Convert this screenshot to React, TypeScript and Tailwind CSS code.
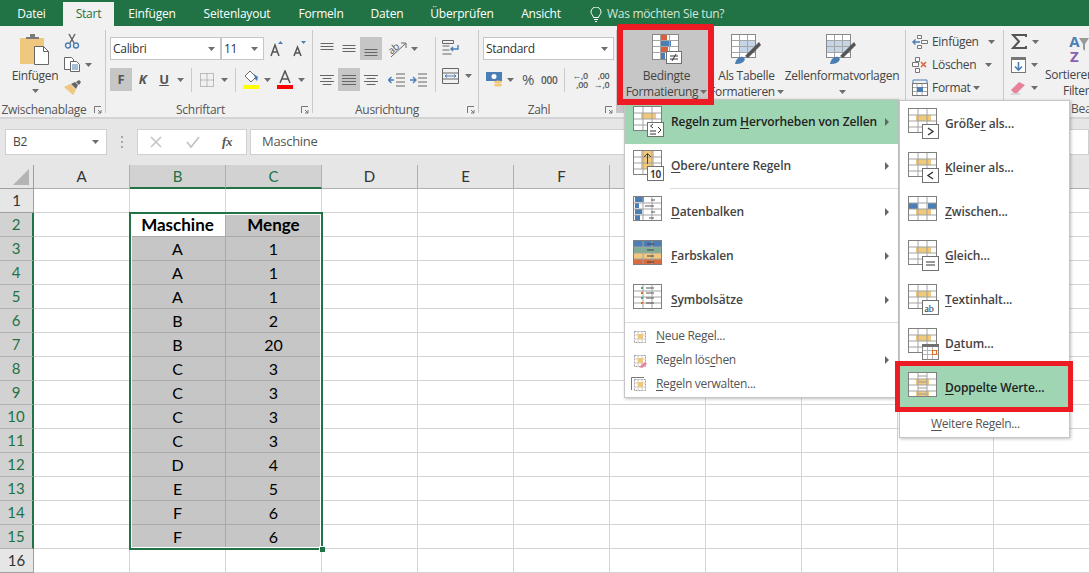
import React from "react";

const columns = ["A", "B", "C", "D", "E", "F", "G", "H", "I", "J", "K"];
const tableRows: [string, string][] = [
  ["Maschine", "Menge"],
  ["A", "1"],
  ["A", "1"],
  ["A", "1"],
  ["B", "2"],
  ["B", "20"],
  ["C", "3"],
  ["C", "3"],
  ["C", "3"],
  ["C", "3"],
  ["D", "4"],
  ["E", "5"],
  ["F", "6"],
  ["F", "6"],
];
const rowNumbers = Array.from({ length: 16 }, (_, i) => i + 1);

const Caret = ({ className = "" }: { className?: string }) => (
  <svg width="7" height="4" viewBox="0 0 7 4" className={`shrink-0 ${className}`}>
    <path d="M0 0h7L3.5 4z" fill="#6e6e6e" />
  </svg>
);

const Launcher = () => (
  <svg width="8" height="8" viewBox="0 0 8 8" className="shrink-0">
    <path d="M.5 7V.5H7M4 4l3 3M7 4v3H4" fill="none" stroke="#777" />
  </svg>
);

const Sep = ({ h = "h-[24px]", m = "mx-[5px]" }: { h?: string; m?: string }) => (
  <div className={`w-px shrink-0 bg-[#c9c9c9] ${h} ${m}`} />
);

const Lines = ({ rows, active = false }: { rows: [number, number][]; active?: boolean }) => (
  <div className={`flex h-[23px] w-[22px] shrink-0 items-center justify-center ${active ? "bg-[#c6c6c6]" : ""}`}>
    <svg width="16" height="16" viewBox="0 0 16 16">
      {rows.map(([y, w], i) => (
        <rect key={i} x={(16 - w) / 2} y={y} width={w} height="1" fill="#666" />
      ))}
    </svg>
  </div>
);

function Group({ width, label, children }: { width: string; label: string; children: React.ReactNode }) {
  return (
    <div className={`flex h-[83px] shrink-0 flex-col border-r border-[#c9c9c9] ${width}`}>
      <div className="h-[71px] shrink-0">{children}</div>
      <div className="mt-[3px] flex h-[12px] shrink-0 items-center pr-[3px]">
        <div className="flex-1 pr-[6px] text-center text-[12px] leading-none text-[#555]">{label}</div>
        <Launcher />
      </div>
    </div>
  );
}

const GridBase = ({ children }: { children?: React.ReactNode }) => (
  <>
    <rect x="1" y="1" width="27" height="24" fill="#fff" />
    {children}
    <g stroke="#a3a3a3" fill="none">
      <path d="M10 1v24M19 1v24M1 7h27M1 13h27M1 19h27" />
    </g>
    <rect x=".5" y=".5" width="28" height="24" fill="none" stroke="#808080" />
  </>
);

const Badge = ({ children }: { children: React.ReactNode }) => (
  <>
    <rect x="14.5" y="16.5" width="16" height="14" fill="#fff" stroke="#707070" />
    {children}
  </>
);

const hl = "#f0c97d";
const blue = "#4a7eb5";

function MenuIcon({ kind }: { kind: string }) {
  return (
    <svg width="32" height="32" viewBox="0 0 32 32" className="shrink-0">
      <GridBase>
        {kind !== "bars" && kind !== "scale" && kind !== "sym" && kind !== "top" && kind !== "ten" && kind !== "dup" && kind !== "between" && (
          <rect x="8" y="7" width="15" height="6" fill={hl} />
        )}
        {kind === "between" && (
          <>
            <rect x="1" y="7" width="9" height="6" fill={blue} />
            <rect x="20" y="7" width="8" height="6" fill={blue} />
            <rect x="8" y="13" width="15" height="6" fill={hl} />
          </>
        )}
        {kind === "ten" && <rect x="8" y="1" width="13" height="18" fill={hl} />}
        {kind === "bars" && (
          <>
            <rect x="2" y="1" width="9" height="5" fill={blue} />
            <rect x="2" y="7" width="4" height="5" fill={blue} />
            <rect x="2" y="13" width="7" height="5" fill={blue} />
            <rect x="2" y="19" width="5" height="5" fill={blue} />
          </>
        )}
        {kind === "scale" && (
          <>
            <rect x="1" y="1" width="27" height="6" fill={blue} />
            <rect x="1" y="7" width="27" height="6" fill="#7fae93" />
            <rect x="1" y="13" width="27" height="6" fill={hl} />
            <rect x="1" y="19" width="27" height="6" fill="#d96b3f" />
          </>
        )}
        {kind === "dup" && (
          <>
            <rect x="8" y="7" width="13" height="6" fill={hl} />
            <rect x="8" y="19" width="13" height="6" fill={hl} />
          </>
        )}
      </GridBase>
      {kind === "ten" && <path d="M14.5 14V4M11 7l3.5-3.5L18 7" fill="none" stroke="#444" />}
      {kind === "bars" && <path d="M18 4h4M12 10h9M18 16h4M16 22h5" stroke="#555" />}
      {kind === "scale" && <path d="M14 4h7M14 10h7M14 16h7M14 22h7" stroke="#444" />}
      {kind === "dup" && <path d="M10 4h9M10 10h9M10 16h9M10 22h9" stroke="#999" />}
      {kind === "sym" && (
        <>
          <path d="M13 4h8M13 9h8M13 14h8M13 19h8" stroke="#555" />
          <rect x="8" y="3" width="2" height="2" fill="#5d9c78" />
          <rect x="8" y="8" width="2" height="2" fill="#e56b1f" />
          <rect x="8" y="13" width="2" height="2" fill="#5d9c78" />
          <rect x="8" y="18" width="2" height="2" fill="#e56b1f" />
        </>
      )}
      {kind === "hi" && (
        <Badge>
          <path d="M20 18l-2.500 2 2.500 2M17 25h6M17 28h6M25 21l3 3-3 3" fill="none" stroke="#333" />
        </Badge>
      )}
      {kind === "ten" && (
        <Badge>
          <text x="17" y="28" fontSize="10" fontWeight="600" fill="#333" fontFamily="Noto Sans">10</text>
        </Badge>
      )}
      {kind === "gt" && <Badge><path d="M20 20l5 3.500-5 3.500" fill="none" stroke="#333" strokeWidth="1.400" /></Badge>}
      {kind === "lt" && <Badge><path d="M25 20l-5 3.500 5 3.500" fill="none" stroke="#333" strokeWidth="1.400" /></Badge>}
      {kind === "eq" && <Badge><path d="M18 22h9M18 25h9" stroke="#333" /></Badge>}
      {kind === "ab" && (
        <Badge>
          <text x="16.500" y="28" fontSize="10" fill="#333" fontFamily="Liberation Serif">ab</text>
        </Badge>
      )}
      {kind === "date" && (
        <>
          <rect x="14.500" y="16.500" width="16" height="15" fill="#fff" stroke="#808080" />
          <rect x="14" y="16" width="17" height="3" fill="#707070" />
          <path d="M19.500 19v12M24.500 19v12M15 22.500h15M15 26.500h15" stroke="#b5b5b5" />
          <rect x="24.500" y="22.500" width="4" height="4" fill="#fff" stroke="#e56b1f" />
        </>
      )}
    </svg>
  );
}

const SmallIcon = ({ kind }: { kind: string }) => (
  <svg width="16" height="16" viewBox="0 0 16 16" className="shrink-0">
    {kind === "manage" && <path d="M.5 14V1.500H13" fill="none" stroke="#777" />}
    <rect x="3.500" y="3.500" width="11" height="11" fill="#fff" stroke="#999" strokeDasharray="2 1" />
    <path d="M3 7h12M3 11h12M7 3v12M11 3v12" stroke="#ccc" />
    <rect x="7" y="6" width="5" height="5" fill={hl} />
    {kind === "del" && <path d="M8 15l6-5 2 2-5 4z" fill="#e8829b" />}
  </svg>
);

const Ul = ({ children }: { children: React.ReactNode }) => <span className="underline underline-offset-2">{children}</span>;

const SubArrow = () => (
  <svg width="4" height="8" viewBox="0 0 4 8" className="mr-[9px]">
    <path d="M0 0l4 4-4 4z" fill="#666" />
  </svg>
);

function BigItem({ kind, active, h = "h-[44px]", textGap = "ml-[6px]", arrow, children }: { kind: string; active?: boolean; h?: string; textGap?: string; arrow?: boolean; children: React.ReactNode }) {
  return (
    <div className={`flex items-center pl-[8px] ${h} ${active ? "bg-[#a0d5b4] text-[#222]" : "text-[#444]"}`}>
      <MenuIcon kind={kind} />
      <div className={`flex-1 text-[12px] font-semibold tracking-[-0.1px] ${textGap}`}>{children}</div>
      {arrow && <SubArrow />}
    </div>
  );
}

function SmallItem({ kind, arrow, children }: { kind: string; arrow?: boolean; children: React.ReactNode }) {
  return (
    <div className="flex h-[24px] items-center pl-[6px] text-[12px] text-[#555]">
      <SmallIcon kind={kind} />
      <div className="ml-[9px] flex-1">{children}</div>
      {arrow && <SubArrow />}
    </div>
  );
}

function Tabs() {
  const tabs = ["Einfügen", "Seitenlayout", "Formeln", "Daten", "Überprüfen", "Ansicht"];
  const widths = ["w-[76px]", "w-[94px]", "w-[74px]", "w-[58px]", "w-[92px]", "w-[66px]"];
  return (
    <div className="flex h-[26px] items-end bg-[#217346] text-[12px] tracking-[-0.2px] text-white">
      <div className="flex h-[24px] w-[63px] items-center justify-center">Datei</div>
      <div className="flex h-[24px] w-[51px] items-center justify-center bg-[#f1f1f1] text-[#217346]">Start</div>
      {tabs.map((t, i) => (
        <div key={t} className={`flex h-[24px] items-center justify-center ${widths[i]}`}>
          {t}
        </div>
      ))}
      <div className="ml-[16px] flex h-[24px] items-center gap-[5px] tracking-[-0.3px] text-[#d5e5da]">
        <svg width="12" height="15" viewBox="0 0 12 15">
          <path d="M3.500 10.500C3 8 1 7.500 1 5a5 5 0 0 1 10 0c0 2.500-2 3-2.500 5.500zM4 12.500h4M5 14.500h2" fill="none" stroke="#fff" />
        </svg>
        Was möchten Sie tun?
      </div>
    </div>
  );
}

const PasteIcon = () => (
  <svg width="30" height="32" viewBox="0 0 30 32">
    <rect x="0" y="4" width="24" height="26" rx="1" fill="#efc77f" />
    <path d="M6 5V3h4V0h5v3h4v2z" fill="#7a7a7a" />
    <path d="M14.500 12.500h9l5 5v13h-14z" fill="#fff" stroke="#666" />
    <path d="M23.500 12.500v5h5" fill="none" stroke="#666" />
  </svg>
);

const CutIcon = () => (
  <svg width="16" height="16" viewBox="0 0 16 16">
    <path d="M5 1l5 9M11 1L6 10" stroke="#666" strokeWidth="1.500" fill="none" />
    <circle cx="4" cy="12.500" r="2.500" fill="none" stroke={blue} strokeWidth="1.400" />
    <circle cx="12" cy="12.500" r="2.500" fill="none" stroke={blue} strokeWidth="1.400" />
  </svg>
);

const CopyIcon = () => (
  <svg width="16" height="15" viewBox="0 0 16 15">
    <path d="M.5.500h7l2 2v10h-9z" fill="#fff" stroke="#666" />
    <path d="M6.500 4.500h6l3 3v7h-9z" fill="#fff" stroke="#666" />
    <path d="M8 8h6M8 10h6M8 12h6" stroke={blue} />
  </svg>
);

const BrushIcon = () => (
  <svg width="18" height="15" viewBox="0 0 18 15">
    <path d="M0 7l6-3 6 6-3 5z" fill="#efc77f" />
    <path d="M7 4l4-2 3 3-2 4z" fill="#666" />
    <path d="M12 2l3-2 2 2-2 3z" fill="#666" />
  </svg>
);

function ClipboardGroup() {
  return (
    <Group width="w-[106px]" label="Zwischenablage">
      <div className="flex">
        <div className="flex w-[64px] shrink-0 flex-col items-center pl-[6px] pt-[4px]">
          <PasteIcon />
          <div className="mt-[2px] text-[12px] leading-[16px] text-[#444]">Einfügen</div>
          <Caret className="mt-[5px]" />
        </div>
        <div className="flex flex-col gap-[8px] pt-[3px]">
          <CutIcon />
          <div className="flex items-center gap-[5px]">
            <CopyIcon />
            <Caret />
          </div>
          <BrushIcon />
        </div>
      </div>
    </Group>
  );
}

const Field = ({ w, text }: { w: string; text: string }) => (
  <div className={`flex h-[23px] items-center justify-between border border-[#c6c6c6] bg-white pl-[2px] pr-[5px] text-[12px] text-[#333] ${w}`}>
    {text}
    <Caret />
  </div>
);

function FontGroup() {
  return (
    <Group width="w-[207px]" label="Schriftart">
      <div className="pl-[4px] pt-[7px]">
        <div className="flex items-center">
          <Field w="w-[111px]" text="Calibri" />
          <Field w="w-[43px]" text="11" />
          <svg width="14" height="16" viewBox="0 0 14 16" className="ml-[6px]">
            <path d="M1 15L5 4l4 11M2.500 11h5" fill="none" stroke="#555" strokeWidth="1.500" />
            <path d="M8 3l2.500-3L13 3z" fill={blue} />
          </svg>
          <svg width="14" height="16" viewBox="0 0 14 16" className="ml-[9px]">
            <path d="M1 15l3.500-9L8 15M2.500 12h4" fill="none" stroke="#555" strokeWidth="1.500" />
            <path d="M8 0h5l-2.500 3z" fill={blue} />
          </svg>
        </div>
        <div className="mt-[8px] flex h-[23px] items-center text-[13px] font-bold text-[#555]">
          <div className="flex h-full w-[22px] items-center justify-center bg-[#c6c6c6]">F</div>
          <div className="w-[21px] text-center italic">K</div>
          <div className="w-[22px] text-center underline">U</div>
          <Caret className="ml-[2px]" />
          <Sep m="mx-[7px]" />
          <svg width="14" height="14" viewBox="0 0 14 14" className="ml-[1px]">
            <path d="M.5.500h13v13H.5z" fill="none" stroke="#888" strokeDasharray="1 1" />
            <path d="M7 .500v13M.5 7h13" stroke="#888" strokeDasharray="1 1" />
          </svg>
          <Caret className="ml-[7px]" />
          <Sep m="mx-[7px]" />
          <svg width="16" height="19" viewBox="0 0 16 19">
            <path d="M7 1l6 6-5 5-6-6z" fill="#fff" stroke="#666" />
            <path d="M11 4l4 3-1 4-2-2z" fill={blue} />
            <rect y="15" width="16" height="4" fill="#ffff00" />
          </svg>
          <Caret className="ml-[5px]" />
          <svg width="16" height="19" viewBox="0 0 16 19" className="ml-[6px]">
            <path d="M3 13L8 1l5 12M5 9h6" fill="none" stroke="#555" strokeWidth="1.500" />
            <rect y="15" width="16" height="4" fill="#ff0000" />
          </svg>
          <Caret className="ml-[5px]" />
        </div>
      </div>
    </Group>
  );
}

function AlignGroup() {
  return (
    <Group width="w-[166px]" label="Ausrichtung">
      <div className="flex pt-[7px]">
        <div className="w-[122px] shrink-0">
          <div className="flex items-center pl-[3px]">
            <Lines rows={[[2, 13], [5, 13], [8, 13]]} />
            <Lines rows={[[4, 13], [7, 13], [10, 13]]} />
            <Lines rows={[[8, 13], [11, 13], [14, 13]]} active />
            <svg width="20" height="18" viewBox="0 0 20 18" className="ml-[6px]">
              <text x="1" y="12" fontSize="10" fill="#555" fontFamily="Open Sans" transform="rotate(-40 6 10)">ab</text>
              <path d="M3 17l14-13M13 3h5v5" stroke="#666" fill="none" />
            </svg>
            <Caret className="ml-[3px]" />
          </div>
          <div className="mt-[8px] flex items-center pl-[3px]">
            <Lines rows={[[3, 14], [6, 9], [9, 14], [12, 9]]} />
            <Lines rows={[[3, 14], [6, 14], [9, 14], [12, 14]]} active />
            <Lines rows={[[3, 14], [6, 9], [9, 14], [12, 9]]} />
            <svg width="17" height="14" viewBox="0 0 17 14" className="ml-[6px]">
              <path d="M8 1h9M8 5h9M8 9h9M8 13h9" stroke="#666" />
              <path d="M6 7H1M3.500 4L.5 7l3 3" fill="none" stroke={blue} strokeWidth="1.400" />
            </svg>
            <svg width="17" height="14" viewBox="0 0 17 14" className="ml-[5px]">
              <path d="M8 1h9M8 5h9M8 9h9M8 13h9" stroke="#666" />
              <path d="M0 7h5M3 4l3 3-3 3" fill="none" stroke={blue} strokeWidth="1.400" />
            </svg>
          </div>
        </div>
        <Sep h="h-[55px]" m="mr-[6px]" />
        <div className="pt-[2px]">
          <svg width="17" height="16" viewBox="0 0 17 16">
            <path d="M.5 1.500h11v3H.5zM.5 7h7M.5 11h7M.5 15h9" fill="none" stroke="#666" />
            <path d="M16 6v4h-7M11 8l-2 2 2 2" fill="none" stroke={blue} strokeWidth="1.400" />
          </svg>
          <div className="mt-[13px] flex items-center gap-[6px]">
            <svg width="17" height="16" viewBox="0 0 17 16">
              <path d="M.5.500h16v15H.5zM.5 5h16M.5 11h16" fill="none" stroke="#666" />
              <path d="M3 8h11M5 6.500L3 8l2 1.500M12 6.500L14 8l-2 1.500" fill="none" stroke={blue} />
            </svg>
            <Caret />
          </div>
        </div>
      </div>
    </Group>
  );
}

function NumberGroup() {
  return (
    <Group width="w-[138px]" label="Zahl">
      <div className="pl-[4px] pt-[7px]">
        <Field w="w-[131px]" text="Standard" />
        <div className="mt-[8px] flex h-[23px] items-center pl-[3px] text-[#555]">
          <svg width="17" height="17" viewBox="0 0 17 17">
            <rect x="0" y="1" width="16" height="9" fill={blue} />
            <circle cx="8" cy="5.500" r="2.500" fill="#fff" />
            <ellipse cx="12" cy="11" rx="4" ry="1.500" fill={hl} />
            <ellipse cx="12" cy="14" rx="4" ry="1.500" fill={hl} />
          </svg>
          <Caret className="ml-[4px]" />
          <div className="ml-[8px] text-[15px] leading-none">%</div>
          <div className="ml-[7px] text-[10px] font-semibold leading-none">000</div>
          <Sep m="mx-[7px]" />
          <div className="flex flex-col items-end text-[9px] font-semibold leading-[9px] tracking-[-0.4px]">
            <span>←,0</span>
            <span>,00</span>
          </div>
          <div className="ml-[6px] flex flex-col items-end text-[9px] font-semibold leading-[9px] tracking-[-0.4px]">
            <span>,00</span>
            <span>→,0</span>
          </div>
        </div>
      </div>
    </Group>
  );
}

function BigButton({ w, lines, active, children }: { w: string; lines: string[]; active?: boolean; children: React.ReactNode }) {
  return (
    <div className={`flex shrink-0 flex-col items-center pt-[4px] text-[12px] leading-[16px] text-[#444] ${w} ${active ? "bg-[#c6c6c6]" : ""}`}>
      <div className="h-[32px]">{children}</div>
      <div className="mt-[2px] whitespace-nowrap">{lines[0]}</div>
      <div className="flex h-[16px] items-center gap-[2px] whitespace-nowrap">
        {lines[1]}
        <Caret />
      </div>
    </div>
  );
}

const TableIcon = ({ accent }: { accent: React.ReactNode }) => (
  <svg width="32" height="31" viewBox="0 0 32 31">
    <rect x=".5" y=".5" width="24" height="23" fill="#fff" stroke="#888" />
    {accent}
    <path d="M8.500 1v22M16.500 1v22M1 6.500h23M1 12.500h23M1 18.500h23" stroke="#a6a6a6" />
    <path d="M4 30c1-5 4-8 8-7l2 2c-1 4-5 5-10 5z" fill={blue} />
    <path d="M14 22l3 2 13-13-2-3z" fill="#555" />
  </svg>
);

function StylesGroup() {
  return (
    <div className="flex h-[83px] w-[289px] shrink-0 border-r border-[#c9c9c9]">
      <BigButton w="w-[93px] pl-[6px]" lines={["Bedingte", "Formatierung"]} active>
        <svg width="30" height="30" viewBox="0 0 30 30">
          <rect x=".5" y=".5" width="26" height="25" fill="#fff" stroke="#888" />
          <rect x="8" y="1" width="7" height="5" fill="#d9603a" />
          <rect x="8" y="7" width="11" height="5" fill={blue} />
          <rect x="8" y="13" width="8" height="5" fill="#d9603a" />
          <rect x="8" y="19" width="5" height="6" fill={blue} />
          <path d="M8.500 1v24M17.500 1v24M1 6.500h25M1 12.500h25M1 18.500h25" stroke="#a6a6a6" />
          <rect x="14.500" y="17.500" width="15" height="12" fill="#fff" stroke="#707070" />
          <path d="M18 22h8M18 25h8M24 20l-4 7" stroke="#333" fill="none" />
        </svg>
      </BigButton>
      <BigButton w="w-[73px]" lines={["Als Tabelle", "Formatieren"]}>
        <TableIcon accent={<rect x="8" y="6" width="16" height="12" fill="#c5d4e6" />} />
      </BigButton>
      <div className="flex w-[118px] shrink-0 flex-col items-center pt-[4px] text-[12px] leading-[16px] text-[#444]">
        <div className="h-[32px]">
          <TableIcon accent={<rect x="1" y="6" width="23" height="12" fill="#c5d4e6" />} />
        </div>
        <div className="mt-[2px] whitespace-nowrap">Zellenformatvorlagen</div>
        <Caret className="mt-[6px]" />
      </div>
    </div>
  );
}

function CellRow({ label, caret, children }: { label: string; caret: string; children: React.ReactNode }) {
  return (
    <div className="flex h-[23px] items-center text-[12px] text-[#444]">
      <div className="flex w-[26px] justify-center pl-[2px]">{children}</div>
      <div>{label}</div>
      <Caret className={caret} />
    </div>
  );
}

function CellsGroup() {
  return (
    <div className="flex h-[83px] w-[98px] shrink-0 flex-col border-r border-[#c9c9c9]">
      <CellRow label="Einfügen" caret="ml-[9px]">
        <svg width="16" height="14" viewBox="0 0 16 14">
          <path d="M5.500.500h4v3h-4zM5.500 10.500h4v3h-4zM9.500 5.500h6v3h-6z" fill="#fff" stroke="#777" />
          <path d="M8 7H1M3.500 4.500L1 7l2.500 2.500" fill="none" stroke={blue} strokeWidth="1.400" />
        </svg>
      </CellRow>
      <CellRow label="Löschen" caret="ml-[9px]">
        <svg width="16" height="16" viewBox="0 0 16 16">
          <path d="M3.500.500h4v4h-4zM.5 5.500h6v4h-6zM3.500 11.500h4v4h-4z" fill="#fff" stroke="#777" />
          <path d="M9 5l5 5M14 5l-5 5" stroke="#d9603a" strokeWidth="1.500" />
        </svg>
      </CellRow>
      <CellRow label="Format" caret="ml-[2px]">
        <svg width="16" height="17" viewBox="0 0 16 17">
          <path d="M1 1h14M1 1v3M15 1v3" stroke={blue} />
          <rect x=".5" y="4.500" width="15" height="12" fill="#fff" stroke="#777" />
          <path d="M5 5v11M10 5v11M1 8.500h14M1 12.500h14" stroke="#aaa" />
          <rect x="5" y="8" width="6" height="5" fill={blue} />
        </svg>
      </CellRow>
    </div>
  );
}

function EditGroup() {
  return (
    <div className="flex h-[87px] flex-1">
      <div className="flex w-[38px] shrink-0 flex-col pl-[7px]">
        <div className="flex h-[23px] items-center gap-[5px]">
          <svg width="16" height="15" viewBox="0 0 16 15">
            <path d="M15 3V1H2l6 6.500L2 14h13v-2" fill="none" stroke="#555" strokeWidth="2" />
          </svg>
          <Caret />
        </div>
        <div className="flex h-[23px] items-center gap-[5px]">
          <svg width="15" height="16" viewBox="0 0 15 16">
            <rect x=".5" y=".5" width="14" height="15" fill="#fff" stroke="#777" />
            <rect width="15" height="3" fill="#777" />
            <path d="M7.500 5v8M4 9.500l3.500 3.500L11 9.500" fill="none" stroke={blue} strokeWidth="1.600" />
          </svg>
          <Caret />
        </div>
        <div className="flex h-[23px] items-center gap-[5px]">
          <svg width="15" height="14" viewBox="0 0 15 14">
            <path d="M0 9l8-8 6 3-8 8H3z" fill="#e8829b" />
            <path d="M0 13h9" stroke="#bbb" />
          </svg>
          <Caret />
        </div>
      </div>
      <div className="flex min-w-0 flex-1 flex-col items-start pl-[3px] pt-[4px] text-[12px] leading-[16px] text-[#444]">
        <div className="flex h-[32px] w-full justify-center pl-[17px] text-[15px] font-bold leading-[15px]">
          <div className="flex flex-col items-center">
            <span className="text-[#4a7eb5]">A</span>
            <span className="text-[#8a5fb0]">Z</span>
          </div>
          <svg width="10" height="14" viewBox="0 0 10 14" className="mt-[4px] shrink-0">
            <path d="M0 0h10L6 6v7L4 11V6z" fill="#999" />
          </svg>
        </div>
        <div className="mt-[2px] whitespace-nowrap">Sortieren</div>
        <div className="w-full pl-[18px]">Filtern</div>
        <div className="mt-[2px] whitespace-nowrap pl-[26px] text-[#555]">Bea</div>
      </div>
    </div>
  );
}

function Ribbon() {
  return (
    <div className="flex h-[93px] overflow-hidden border-b-2 border-[#d4d4d4] bg-[#f1f1f1] pt-[4px]">
      <ClipboardGroup />
      <FontGroup />
      <AlignGroup />
      <NumberGroup />
      <StylesGroup />
      <CellsGroup />
      <EditGroup />
    </div>
  );
}

function FormulaBar() {
  return (
    <div className="flex h-[46px] items-start bg-[#e6e6e6] pt-[10px] text-[12px] text-[#444]">
      <div className="ml-[5px] flex h-[26px] w-[102px] items-center justify-between border border-[#d0d0d0] bg-white px-[7px]">
        B2
        <Caret />
      </div>
      <div className="flex h-[26px] w-[30px] flex-col items-center justify-center gap-[3px]">
        <div className="h-[2px] w-[2px] bg-[#a6a6a6]" />
        <div className="h-[2px] w-[2px] bg-[#a6a6a6]" />
        <div className="h-[2px] w-[2px] bg-[#a6a6a6]" />
      </div>
      <div className="flex h-[26px] w-[110px] items-center border border-[#d0d0d0] bg-white pl-[12px]">
        <svg width="12" height="12" viewBox="0 0 12 12">
          <path d="M1 1l10 10M11 1L1 11" stroke="#c4c4c4" strokeWidth="1.600" />
        </svg>
        <svg width="14" height="12" viewBox="0 0 14 12" className="ml-[24px]">
          <path d="M1 6l4 5 8-10" fill="none" stroke="#c4c4c4" strokeWidth="1.800" />
        </svg>
        <span className="ml-[22px] [font-family:'Liberation_Serif',serif] text-[13px] font-bold italic text-[#555]">fx</span>
      </div>
      <div className="ml-[3px] flex h-[26px] flex-1 items-center border border-[#d0d0d0] bg-white pl-[11px] text-[13px] text-[#555]">Maschine</div>
    </div>
  );
}

function Sheet() {
  return (
    <div className="relative grid grid-cols-[34px_repeat(11,96px)] auto-rows-[24px] tracking-normal [font-family:Lato,sans-serif]">
      <div className="flex items-end justify-end border-r border-b border-[#9f9f9f] bg-[#e6e6e6] pb-[3px] pr-[4px]">
        <svg width="16" height="16" viewBox="0 0 16 16">
          <path d="M16 0v16H0z" fill="#b4b4b4" />
        </svg>
      </div>
      {columns.map((c) => {
        const active = c === "B" || c === "C";
        return (
          <div
            key={c}
            className={`flex items-center justify-center border-r text-[15px] ${
              active ? "border-b-2 border-r-[#b0b0b0] border-b-[#217346] bg-[#d2d2d2] text-[#217346]" : "border-b border-[#b0b0b0] bg-[#e6e6e6] text-[#333]"
            }`}
          >
            {c}
          </div>
        );
      })}
      {rowNumbers.map((n) => {
        const active = n >= 2 && n <= 15;
        const row = active ? tableRows[n - 2] : null;
        return (
          <React.Fragment key={n}>
            <div
              className={`flex items-center justify-center border-b text-[15px] ${
                active ? "border-r-2 border-b-[#b0b0b0] border-r-[#217346] bg-[#d2d2d2] text-[#217346]" : "border-r border-[#9f9f9f] bg-[#e6e6e6] text-[#333]"
              }`}
            >
              {n}
            </div>
            {columns.map((c) => {
              const inTable = row !== null && (c === "B" || c === "C");
              const header = n === 2;
              const white = c === "B" && header;
              return (
                <div
                  key={c}
                  className={`flex items-center justify-center border-r border-b text-black ${
                    inTable ? `border-[#a9a9a9] ${white ? "bg-white" : "bg-[#c6c6c6]"} ${header ? "text-[17px] font-bold" : "text-[16px]"}` : "border-[#d4d4d4] bg-white"
                  }`}
                >
                  {inTable ? row![c === "B" ? 0 : 1] : ""}
                </div>
              );
            })}
          </React.Fragment>
        );
      })}
      {/* selection frame */}
      <div className="pointer-events-none absolute left-[129px] top-[47px] h-[338px] w-[194px] border-2 border-[#217346]">
        <div className="h-full w-full border border-white" />
      </div>
      <div className="absolute left-[319px] top-[381px] box-content h-[5px] w-[5px] border-l border-t border-white bg-[#217346]" />
    </div>
  );
}

function RulesMenu() {
  return (
    <div className="absolute left-[624px] top-[99px] w-[275px] border border-[#c6c6c6] bg-white shadow-[1px_1px_3px_rgba(0,0,0,0.25)]">
      <BigItem kind="hi" active arrow>Regeln zum <Ul>H</Ul>ervorheben von Zellen</BigItem>
      <BigItem kind="ten" arrow><Ul>O</Ul>bere/untere Regeln</BigItem>
      <div className="ml-[45px] h-px bg-[#dcdcdc]" />
      <BigItem kind="bars" h="h-[45px]" arrow><Ul>D</Ul>atenbalken</BigItem>
      <BigItem kind="scale" arrow><Ul>F</Ul>arbskalen</BigItem>
      <BigItem kind="sym" arrow><Ul>S</Ul>ymbolsätze</BigItem>
      <div className="h-px bg-[#dcdcdc]" />
      <div className="py-[1px]">
        <SmallItem kind="new"><Ul>N</Ul>eue Regel...</SmallItem>
        <SmallItem kind="del" arrow>Regeln lös<Ul>c</Ul>hen</SmallItem>
        <SmallItem kind="manage"><Ul>R</Ul>egeln verwalten...</SmallItem>
      </div>
    </div>
  );
}

function ValuesMenu() {
  const gap = "ml-[5px]";
  return (
    <div className="absolute left-[899px] top-[100px] w-[171px] border border-[#c6c6c6] bg-white pt-[1px] shadow-[1px_1px_3px_rgba(0,0,0,0.25)]">
      <BigItem kind="gt" textGap={gap}>Größe<Ul>r</Ul> als...</BigItem>
      <BigItem kind="lt" textGap={gap}><Ul>K</Ul>leiner als...</BigItem>
      <BigItem kind="between" textGap={gap}><Ul>Z</Ul>wischen...</BigItem>
      <BigItem kind="eq" textGap={gap}><Ul>G</Ul>leich...</BigItem>
      <BigItem kind="ab" textGap={gap}><Ul>T</Ul>extinhalt...</BigItem>
      <BigItem kind="date" textGap={gap}>D<Ul>a</Ul>tum...</BigItem>
      <BigItem kind="dup" textGap={gap} active><Ul>D</Ul>oppelte Werte...</BigItem>
      <div className="flex h-[27px] items-center pl-[31px] text-[12px] text-[#555]"><Ul>W</Ul>eitere Regeln...</div>
    </div>
  );
}

export default function App() {
  return (
    <div className="relative h-screen overflow-hidden bg-white tracking-[-0.3px] [font-family:'Open_Sans',sans-serif]">
      <Tabs />
      <Ribbon />
      <FormulaBar />
      <Sheet />
      <RulesMenu />
      <ValuesMenu />
      {/* red call-out frames */}
      <div className="absolute left-[617px] top-[24px] h-[81px] w-[97px] border-[6px] border-[#ed1c24]" />
      <div className="absolute left-[895px] top-[361px] h-[51px] w-[178px] border-[5px] border-[#ed1c24]" />
    </div>
  );
}
